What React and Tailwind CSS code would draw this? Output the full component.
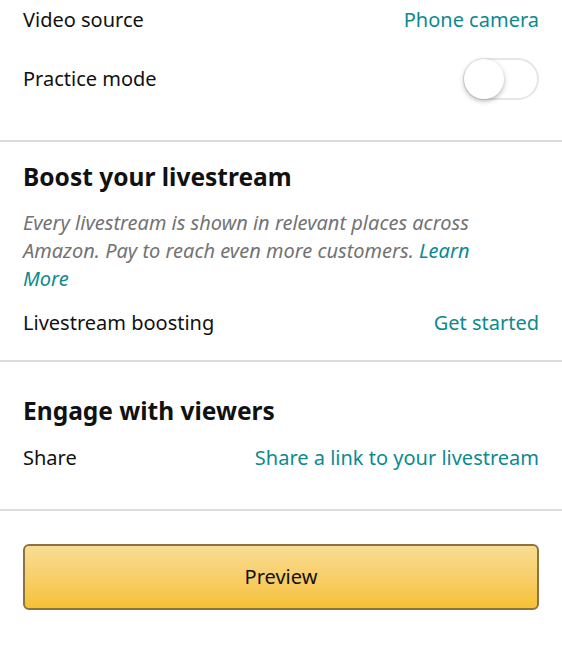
export default function App() {
  const font = { fontFamily: '"Noto Sans", "Open Sans", sans-serif' };
  return (
    <div className="w-[562px] h-[645px] bg-white text-[#111111] overflow-hidden" style={font}>
      <div className="px-[23px] pb-[39px]">
        <div className="h-[40px] flex items-center justify-between text-[20px]">
          <span>Video source</span>
          <span className="text-[#0b8a8f]">Phone camera</span>
        </div>
        <div className="mt-[17px] h-[44px] flex items-center justify-between text-[20px]">
          <span>Practice mode</span>
          <div className="relative w-[76px] h-[42px] rounded-full border-2 border-[#e6e6e6] bg-white">
            <div className="absolute left-[-1px] top-[-1px] w-[40px] h-[40px] rounded-full bg-white shadow-[0_2px_5px_rgba(0,0,0,0.3)]" />
          </div>
        </div>
      </div>
      <div className="h-[2px] bg-[#dcdcdc]" />
      <div className="px-[23px] pt-[19px] pb-[23px]">
        <div className="text-[24.5px] leading-[32px] font-bold">Boost your livestream</div>
        <p className="mt-[16px] text-[20px] leading-[28px] italic text-[#737373] pr-[30px]">
          Every livestream is shown in relevant places across Amazon. Pay to reach even more customers.{' '}
          <span className="text-[#0b8a8f]">Learn More</span>
        </p>
        <div className="mt-[16px] h-[28px] flex items-center justify-between text-[20px]">
          <span>Livestream boosting</span>
          <span className="text-[#0b8a8f]">Get started</span>
        </div>
      </div>
      <div className="h-[2px] bg-[#dcdcdc]" />
      <div className="px-[23px] pt-[33px] pb-[37px]">
        <div className="text-[24.5px] leading-[32px] font-bold">Engage with viewers</div>
        <div className="mt-[17px] h-[28px] flex items-center justify-between text-[20px]">
          <span>Share</span>
          <span className="text-[#0b8a8f]">Share a link to your livestream</span>
        </div>
      </div>
      <div className="h-[2px] bg-[#dcdcdc]" />
      <div className="px-[23px] pt-[33px]">
        <div className="h-[66px] rounded-[6px] border-2 border-[#8c7440] bg-gradient-to-b from-[#f9dc93] to-[#f6c12f] flex items-center justify-center text-[20px]">
          Preview
        </div>
      </div>
    </div>
  );
}
